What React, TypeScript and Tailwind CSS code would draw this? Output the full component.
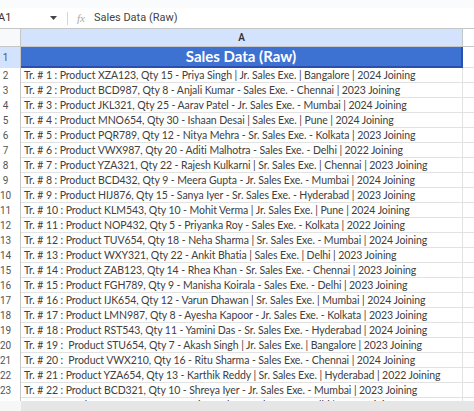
import React from "react";

const rows: string[] = [
  "Tr. # 1 : Product XZA123, Qty 15 - Priya Singh | Jr. Sales Exe. | Bangalore | 2024 Joining",
  "Tr. # 2 : Product BCD987, Qty 8 - Anjali Kumar - Sales Exe. - Chennai | 2023 Joining",
  "Tr. # 3 : Product JKL321, Qty 25 - Aarav Patel - Jr. Sales Exe. - Mumbai | 2024 Joining",
  "Tr. # 4 : Product MNO654, Qty 30 - Ishaan Desai | Sales Exe. | Pune | 2024 Joining",
  "Tr. # 5 : Product PQR789, Qty 12 - Nitya Mehra - Sr. Sales Exe. - Kolkata | 2023 Joining",
  "Tr. # 6 : Product VWX987, Qty 20 - Aditi Malhotra - Sales Exe. - Delhi | 2022 Joining",
  "Tr. # 7 : Product YZA321, Qty 22 - Rajesh Kulkarni | Sr. Sales Exe. | Chennai | 2023 Joining",
  "Tr. # 8 : Product BCD432, Qty 9 - Meera Gupta - Jr. Sales Exe. - Mumbai | 2024 Joining",
  "Tr. # 9 : Product HIJ876, Qty 15 - Sanya Iyer - Sr. Sales Exe. - Hyderabad | 2023 Joining",
  "Tr. # 10 : Product KLM543, Qty 10 - Mohit Verma | Jr. Sales Exe. | Pune | 2024 Joining",
  "Tr. # 11 : Product NOP432, Qty 5 - Priyanka Roy - Sales Exe. - Kolkata | 2022 Joining",
  "Tr. # 12 : Product TUV654, Qty 18 - Neha Sharma | Sr. Sales Exe. - Mumbai | 2024 Joining",
  "Tr. # 13 : Product WXY321, Qty 22 - Ankit Bhatia | Sales Exe. | Delhi | 2023 Joining",
  "Tr. # 14 : Product ZAB123, Qty 14 - Rhea Khan - Sr. Sales Exe. - Chennai | 2023 Joining",
  "Tr. # 15 : Product FGH789, Qty 9 - Manisha Koirala - Sales Exe. - Delhi | 2023 Joining",
  "Tr. # 16 : Product IJK654, Qty 12 - Varun Dhawan | Sr. Sales Exe. | Mumbai | 2024 Joining",
  "Tr. # 17 : Product LMN987, Qty 8 - Ayesha Kapoor - Jr. Sales Exe. - Kolkata | 2023 Joining",
  "Tr. # 18 : Product RST543, Qty 11 - Yamini Das - Sr. Sales Exe. - Hyderabad | 2024 Joining",
  "Tr. # 19 :  Product STU654, Qty 7 - Akash Singh | Jr. Sales Exe. | Bangalore | 2023 Joining",
  "Tr. # 20 :  Product VWX210, Qty 16 - Ritu Sharma - Sales Exe. - Chennai | 2024 Joining",
  "Tr. # 21 : Product YZA654, Qty 13 - Karthik Reddy | Sr. Sales Exe. | Hyderabad | 2022 Joining",
  "Tr. # 22 : Product BCD321, Qty 10 - Shreya Iyer - Jr. Sales Exe. - Mumbai | 2023 Joining",
  "Tr. # 23 : Product HIJ432, Qty 19 - Amit Patel - Sr. Sales Exe. - Delhi | 2023 Joining",
];

function RowNum({ n, active }: { n: number; active?: boolean }) {
  return (
    <div
      className={`w-[21px] shrink-0 border-r border-[#c4c7c5] flex items-center ${active ? "bg-[#d3e3fd]" : "bg-white"}`}
    >
      <div className="w-[11px] text-center text-[10px] text-[#555] font-['Roboto',sans-serif] leading-none">{n}</div>
    </div>
  );
}

export default function App() {
  return (
    <div className="relative w-[474px] h-[411px] overflow-hidden bg-white flex flex-col font-['Lato',sans-serif]">
      {/* top strip */}
      <div className="h-[8px] shrink-0 bg-[#f9fbfd]" />
      {/* formula bar */}
      <div className="h-[21px] shrink-0 flex items-center bg-white border-b border-[#c4c7c5] font-['Roboto',sans-serif]">
        <div className="w-[67px] shrink-0 flex items-center justify-between pr-[10px]">
          <span className="text-[11px] text-[#333] -ml-[2px]">A1</span>
          <svg width="7" height="4" viewBox="0 0 7 4">
            <path d="M0 0 L7 0 L3.5 4 Z" fill="#444" />
          </svg>
        </div>
        <div className="w-px h-[13px] bg-[#d5d5d5]" />
        <span className="ml-[9px] text-[11px] italic text-[#aaa] font-['Liberation_Serif',serif]">fx</span>
        <span className="ml-[9px] text-[11px] text-[#444]">Sales Data (Raw)</span>
      </div>
      {/* column header */}
      <div className="h-[18px] shrink-0 flex border-b border-[#c4c7c5]">
        <div className="w-[21px] shrink-0 bg-[#f8f9fa] border-r border-[#c4c7c5]" />
        <div className="w-[442px] shrink-0 bg-[#d3e3fd] border-r border-[#c4c7c5] flex items-center justify-center text-[10px] font-semibold text-[#333] font-['Roboto',sans-serif]">
          A
        </div>
        <div className="flex-1 bg-white" />
      </div>
      {/* row 1 */}
      <div className="h-[21px] shrink-0 flex">
        <RowNum n={1} active />
        <div className="w-[442px] shrink-0 bg-[#3d72d3] border-b-2 border-r-2 border-[#2a4fb0] flex items-center justify-center text-[15px] font-bold text-white leading-none">
          Sales Data (Raw)
        </div>
        <div className="flex-1 border-b border-[#e2e2e2]" />
      </div>
      {rows.map((r, i) => (
        <div key={i} className="h-[15px] shrink-0 flex">
          <RowNum n={i + 2} />
          <div className="w-[442px] shrink-0 border-b border-r border-[#e2e2e2] flex items-center pl-[3px] overflow-hidden">
            <span className="whitespace-pre text-[10.5px] tracking-[-0.08px] text-[#404040] leading-none">{r}</span>
          </div>
          <div className="flex-1 border-b border-[#e2e2e2]" />
        </div>
      ))}
      {/* scrollbar */}
      <div className="absolute left-0 top-[401px] w-[474px] h-[10px] flex">
        <div className="w-[21px] bg-[#f7f7f7]" />
        <div className="flex-1 bg-[#e6e6e6]" />
      </div>
    </div>
  );
}
